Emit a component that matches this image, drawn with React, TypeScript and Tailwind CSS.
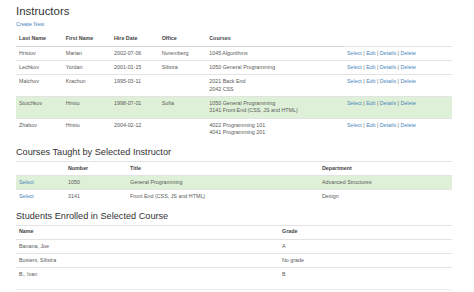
import React from 'react';

// Scaled-down Bootstrap 3 page (Contoso University style instructor index)

type Instructor = {
  last: string;
  first: string;
  hired: string;
  office: string;
  courses: string[];
  selected?: boolean;
};

const instructors: Instructor[] = [
  { last: 'Hristov', first: 'Marian', hired: '2002-07-06', office: 'Nuremberg', courses: ['1045 Algorithms'] },
  { last: 'Lechkov', first: 'Yordan', hired: '2001-01-15', office: 'Silistra', courses: ['1050 General Programming'] },
  { last: 'Malchov', first: 'Krachun', hired: '1995-03-11', office: '', courses: ['2021 Back End', '2042 CSS'] },
  {
    last: 'Stoichkov',
    first: 'Hristo',
    hired: '1998-07-01',
    office: 'Sofia',
    courses: ['1050 General Programming', '3141 Front End (CSS, JS and HTML)'],
    selected: true,
  },
  { last: 'Zhabov', first: 'Hristo', hired: '2004-02-12', office: '', courses: ['4022 Programming 101', '4041 Programming 201'] },
];

const courses = [
  { number: '1050', title: 'General Programming', dept: 'Advanced Structures', selected: true },
  { number: '3141', title: 'Front End (CSS, JS and HTML)', dept: 'Design' },
];

const students = [
  { name: 'Banana, Joe', grade: 'A' },
  { name: 'Busters, Silistra', grade: 'No grade' },
  { name: 'B., Ivan', grade: 'B' },
];

const td = 'px-[3px] py-[2.8px] align-top border-t border-[#e3e3e3]';
const th = 'px-[3px] py-[2.8px] align-top text-left font-bold text-[#444]';
const link = 'text-[#4a86c0]';

function Links() {
  return (
    <>
      <a className={link}>Select</a> | <a className={link}>Edit</a> | <a className={link}>Details</a> |{' '}
      <a className={link}>Delete</a>
    </>
  );
}

export default function App() {
  return (
    <div className="w-[474px] h-[292px] overflow-hidden bg-white pl-[16px] font-['Liberation_Sans',Arial,sans-serif] text-[#5a5a5a] text-[5.35px] leading-[7.6px]">
      <div className="w-[436px]">
        <h2 className="mt-[5px] mb-[3.8px] text-[11.46px] leading-[12.6px] font-normal text-[#333]">Instructors</h2>
        <p className="mb-[3.6px]">
          <a className={link}>Create New</a>
        </p>

        {/* ── Instructors ── */}
        <table className="w-[436px] table-fixed border-collapse">
          <colgroup>
            <col className="w-[46.7px]" />
            <col className="w-[48.3px]" />
            <col className="w-[47.7px]" />
            <col className="w-[47.6px]" />
            <col className="w-[137.7px]" />
            <col />
          </colgroup>
          <thead>
            <tr>
              <th className={`${th} border-b border-[#d6d6d6]`}>Last Name</th>
              <th className={`${th} border-b border-[#d6d6d6]`}>First Name</th>
              <th className={`${th} border-b border-[#d6d6d6]`}>Hire Date</th>
              <th className={`${th} border-b border-[#d6d6d6]`}>Office</th>
              <th className={`${th} border-b border-[#d6d6d6]`}>Courses</th>
            </tr>
          </thead>
          <tbody>
            {instructors.map((i) => (
              <tr key={i.last} className={i.selected ? 'bg-[#dff0d8]' : ''}>
                <td className={td}>{i.last}</td>
                <td className={td}>{i.first}</td>
                <td className={td}>{i.hired}</td>
                <td className={td}>{i.office}</td>
                <td className={td}>
                  {i.courses.map((c) => (
                    <div key={c}>{c}</div>
                  ))}
                </td>
                <td className={td}>
                  <Links />
                </td>
              </tr>
            ))}
          </tbody>
        </table>

        {/* ── Courses ── */}
        <h3 className="mt-[7.4px] mb-[3.8px] text-[9.17px] leading-[10.1px] font-normal text-[#333]">
          Courses Taught by Selected Instructor
        </h3>
        <table className="w-[436px] table-fixed border-collapse">
          <colgroup>
            <col className="w-[49px]" />
            <col className="w-[62px]" />
            <col className="w-[192px]" />
            <col />
          </colgroup>
          <tbody>
            <tr>
              <th className={`${th} border-t border-[#e3e3e3]`}></th>
              <th className={`${th} border-t border-[#e3e3e3]`}>Number</th>
              <th className={`${th} border-t border-[#e3e3e3]`}>Title</th>
              <th className={`${th} border-t border-[#e3e3e3]`}>Department</th>
            </tr>
            {courses.map((c) => (
              <tr key={c.number} className={c.selected ? 'bg-[#dff0d8]' : ''}>
                <td className={td}>
                  <a className={link}>Select</a>
                </td>
                <td className={td}>{c.number}</td>
                <td className={td}>{c.title}</td>
                <td className={td}>{c.dept}</td>
              </tr>
            ))}
          </tbody>
        </table>

        {/* ── Students ── */}
        <h3 className="mt-[7.4px] mb-[3.8px] text-[9.17px] leading-[10.1px] font-normal text-[#333]">
          Students Enrolled in Selected Course
        </h3>
        <table className="w-[436px] table-fixed border-collapse">
          <colgroup>
            <col className="w-[263px]" />
            <col />
          </colgroup>
          <tbody>
            <tr>
              <th className={`${th} border-t border-[#e3e3e3]`}>Name</th>
              <th className={`${th} border-t border-[#e3e3e3]`}>Grade</th>
            </tr>
            {students.map((s) => (
              <tr key={s.name}>
                <td className={td}>{s.name}</td>
                <td className={td}>{s.grade}</td>
              </tr>
            ))}
          </tbody>
        </table>

        <hr className="mt-[7.4px] border-t border-[#eeeeee]" />
      </div>
    </div>
  );
}
